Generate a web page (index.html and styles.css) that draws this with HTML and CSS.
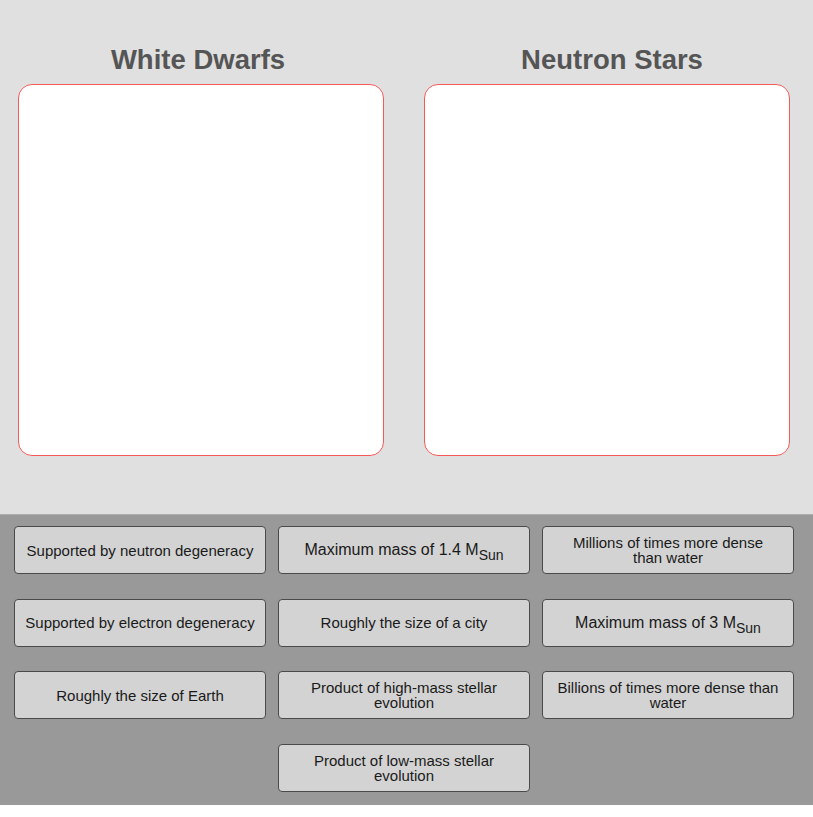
FILE: index.html
```html
<!DOCTYPE html>
<html lang="en">
<head>
<meta charset="utf-8">
<title>White Dwarfs and Neutron Stars</title>
<link rel="stylesheet" href="styles.css">
</head>
<body>
  <section class="targets">
    <div class="target target-left">
      <h2 class="target-title">White Dwarfs</h2>
      <div class="drop-zone"></div>
    </div>
    <div class="target target-right">
      <h2 class="target-title">Neutron Stars</h2>
      <div class="drop-zone"></div>
    </div>
  </section>
  <section class="bank">
    <div class="card"><span class="label">Supported by neutron degeneracy</span></div>
    <div class="card card-lg"><span class="label">Maximum mass of 1.4 M<sub>Sun</sub></span></div>
    <div class="card"><span class="label">Millions of times more dense<br>than water</span></div>

    <div class="card"><span class="label">Supported by electron degeneracy</span></div>
    <div class="card"><span class="label">Roughly the size of a city</span></div>
    <div class="card card-lg"><span class="label">Maximum mass of 3 M<sub>Sun</sub></span></div>

    <div class="card"><span class="label">Roughly the size of Earth</span></div>
    <div class="card"><span class="label">Product of high-mass stellar evolution</span></div>
    <div class="card"><span class="label">Billions of times more dense than water</span></div>

    <div class="card card-mid"><span class="label">Product of low-mass stellar evolution</span></div>
  </section>
</body>
</html>
```
FILE: styles.css
```css
html, body {
  margin: 0;
  padding: 0;
  background: #ffffff;
}

body {
  width: 813px;
  font-family: "Liberation Sans", Arial, sans-serif;
}

.targets {
  background: #e0e0e0;
  height: 514px;
  box-sizing: border-box;
  padding: 44px 0 0 18px;
  display: flex;
  gap: 40px;
}

.target {
  width: 366px;
  display: flex;
  flex-direction: column;
}

.target-title {
  margin: 0 0 8px;
  font-size: 27.5px;
  line-height: 32px;
  font-weight: bold;
  color: #555555;
  text-align: center;
}

.target-left .target-title {
  padding-right: 6px;
}

.target-right .target-title {
  padding-left: 10px;
}

.drop-zone {
  height: 372px;
  box-sizing: border-box;
  background: #ffffff;
  border: 1px solid #f55a5a;
  border-radius: 14px;
}

.bank {
  background: #999999;
  border-top: 1px solid #adadad;
  box-sizing: border-box;
  height: 291px;
  padding: 11px 0 0 14px;
  display: grid;
  grid-template-columns: repeat(3, 252px);
  grid-auto-rows: 48px;
  column-gap: 12px;
  row-gap: 24.6px;
}

.card {
  box-sizing: border-box;
  background: #d3d3d3;
  border: 1px solid #4a4a4a;
  border-radius: 4px;
  display: flex;
  align-items: center;
  justify-content: center;
  text-align: center;
  padding: 0 10px;
  font-size: 15px;
  line-height: 15px;
  color: #1a1a1a;
}

.card-lg {
  font-size: 16px;
  line-height: 18px;
}

.card sub {
  font-size: 14px;
  vertical-align: -5px;
  line-height: 0;
}

.card-mid {
  grid-column: 2;
}
```
